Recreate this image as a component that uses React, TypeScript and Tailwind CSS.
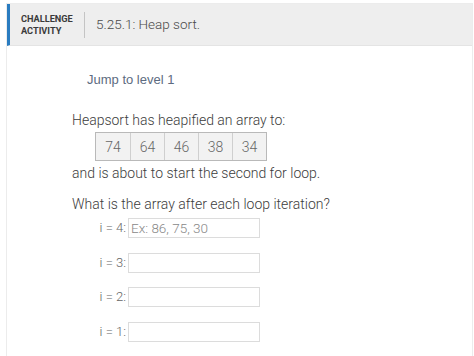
import React from "react";

export default function App() {
  const arr = [74, 64, 46, 38, 34];
  const rows = [
    { label: "i = 4:", ph: "Ex: 86, 75, 30" },
    { label: "i = 3:", ph: "" },
    { label: "i = 2:", ph: "" },
    { label: "i = 1:", ph: "" },
  ];
  return (
    <div
      className="w-[474px] h-[356px] bg-white pl-[6px] pt-[3px] overflow-hidden"
      style={{ fontFamily: "Roboto, 'Liberation Sans', sans-serif" }}
    >
      <div className="w-[467px] h-[360px] border border-[#ececec] border-b-0">
        <div className="h-[42px] bg-[#eeeeee] border-l-[3px] border-[#2a7cc0] border-b border-b-[#e4e4e4] flex items-center">
          <div className="pl-[11px] w-[74px] text-[9.2px] font-bold leading-[12px] text-[#3a3a3a]">
            <div>CHALLENGE</div>
            <div>ACTIVITY</div>
          </div>
          <div className="w-px h-[26px] bg-[#c4c4c4]" />
          <div className="pl-[11px] text-[13.5px] font-light text-[#4a4a4a]">5.25.1: Heap sort.</div>
        </div>
        <div
          className="pl-[80px] pt-[26px] text-[13px] text-[#5d6b80] leading-[16px]"
          style={{ fontFamily: "'Liberation Sans', Arial, sans-serif" }}
        >
          Jump to level 1
        </div>
        <div className="pl-[65px] pt-[23px] text-[14px] font-light text-[#3c3c3c] leading-[18px]">
          <div>Heapsort has heapified an array to:</div>
          <div className="flex pl-[23px] mt-[3px]">
            <div className="flex border border-[#b9b9b9]">
              {arr.map((n, i) => (
                <div
                  key={i}
                  className={`w-[34px] h-[27px] bg-[#f2f2f2] flex items-center justify-center text-[14px] text-[#666] font-light ${i > 0 ? "border-l border-[#cfcfcf]" : ""}`}
                >
                  {n}
                </div>
              ))}
            </div>
          </div>
          <div className="mt-[3px]">and is about to start the second for loop.</div>
          <div className="mt-[13px]">What is the array after each loop iteration?</div>
          <div className="pl-[24px] flex flex-col gap-[14.5px] mt-[5px]">
            {rows.map((r, i) => (
              <div key={i} className="flex items-center">
                <div className="w-[32px] pr-[2px] text-right text-[13px] text-[#666] font-light">{r.label}</div>
                <div className="w-[132px] h-[20px] border border-[#dcdcdc] flex items-center px-[2px] text-[13.5px] text-[#888] font-light">
                  {r.ph}
                </div>
              </div>
            ))}
          </div>
        </div>
      </div>
    </div>
  );
}
